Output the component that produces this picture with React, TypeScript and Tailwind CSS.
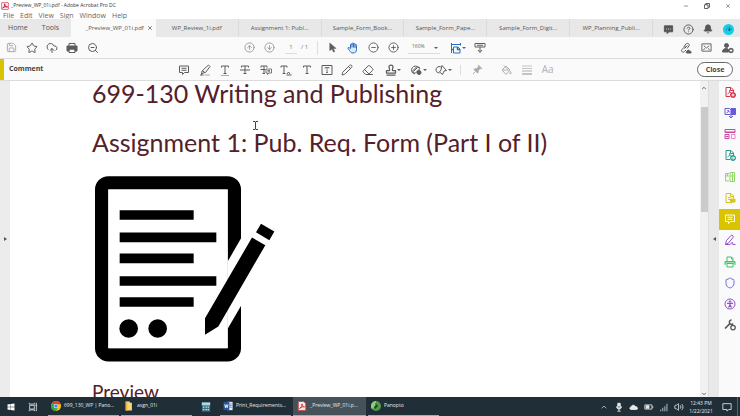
import { useState } from "react";
import type { ReactNode } from "react";
import {
  Bell,
  ChevronUp,
  CircleArrowDown,
  CircleArrowUp,
  CircleMinus,
  CirclePlus,
  CircleQuestionMark,
  CloudUpload,
  Eraser,
  Minus,
  Pencil,
  Save,
  Shield,
  Star,
  Volume2,
  X,
  ZoomOut,
} from "lucide-react";
import { FaWindows } from "react-icons/fa";

interface IconProps {
  children: ReactNode;
  className?: string;
  fill?: string;
}

function Icon({ children, className = "size-3", fill = "none" }: IconProps) {
  return (
    <svg
      viewBox="0 0 24 24"
      className={className}
      fill={fill}
      stroke="currentColor"
      strokeWidth="2"
      strokeLinejoin="round"
      aria-hidden="true"
    >
      {children}
    </svg>
  );
}

interface ToolProps {
  label: string;
  children: ReactNode;
  menu?: boolean;
  className?: string;
}

function Tool({ label, children, menu, className = "" }: ToolProps) {
  return (
    <button type="button" aria-label={label} className={`relative flex h-5 items-center justify-center ${className}`}>
      {children}
      {menu && (
        <svg viewBox="0 0 4 2" className="absolute right-0.5 h-0.5 w-1" fill="currentColor" aria-hidden="true">
          <path d="M0 0h4L2 2z" />
        </svg>
      )}
    </button>
  );
}

function AcrobatLogo({ className }: { className: string }) {
  return (
    <svg viewBox="0 0 24 24" className={className} aria-hidden="true">
      <rect x="1" y="1" width="22" height="22" rx="5" fill="#fbe9ec" stroke="#d6304a" strokeWidth="2" />
      <path
        d="M5 18c3-1 8-9 7-12-1-2-2 0-1 3 2 5 6 7 9 6 1-2-8-2-15 3z"
        fill="none"
        stroke="#c8102e"
        strokeWidth="2.500"
      />
    </svg>
  );
}

const menus = ["File", "Edit", "View", "Sign", "Window", "Help"];

const tabs = [
  "_Preview_WP_01i.pdf",
  "WP_Review_1i.pdf",
  "Assignment 1: Publ...",
  "Sample_Form_Book...",
  "Sample_Form_Pape...",
  "Sample_Form_Digit...",
  "WP_Planning_Publi...",
];

const letterT = <path d="M5 7V4h14v3M12 4v15M9 19h6" />;

const markupTools = [
  {
    label: "Add sticky note",
    icon: (
      <Icon>
        <path d="M3 4h18v13h-8l-4 4v-4H3zM7 8.500h10M7 12.500h10" />
      </Icon>
    ),
  },
  {
    label: "Highlight text",
    icon: (
      <Icon>
        <path d="M19 2l3 3-9 12-5 1-3 3 1-7zM7 14l5 3M2 22h7" />
        <path d="M11 22h11" strokeWidth="1" />
      </Icon>
    ),
  },
  {
    label: "Underline text",
    icon: (
      <Icon>
        {letterT}
        <path d="M4 23h16" strokeWidth="1" />
      </Icon>
    ),
  },
  {
    label: "Strikethrough text",
    icon: (
      <Icon>
        {letterT}
        <path d="M2 12h20" />
      </Icon>
    ),
  },
  {
    label: "Replace text",
    icon: (
      <Icon>
        <path d="M2 7V4h12v3M8 4v15M5 19h5M1 11h10" />
        <path d="M12 10h11v8h-5l-3 3v-3h-3zM15 13h5M15 15.500h5" strokeWidth="1.600" />
      </Icon>
    ),
  },
  {
    label: "Insert text",
    icon: (
      <Icon>
        <path d="M2 7V4h12v3M8 4v15M5 19h6" />
        <path d="M14 20l3-4 3 4M13 22h10" />
      </Icon>
    ),
  },
  { label: "Add text comment", icon: <Icon>{letterT}</Icon> },
  {
    label: "Add text box",
    icon: (
      <Icon>
        <path d="M2 3h20v18H2z" />
        <path d="M8 9V7h8v2M12 7v10M10 17h4" strokeWidth="1.600" />
      </Icon>
    ),
  },
  { label: "Draw freehand", icon: <Pencil className="size-3" /> },
  { label: "Erase drawing", icon: <Eraser className="size-3" /> },
];

const attachTools = [
  {
    label: "Add stamp",
    icon: (
      <Icon>
        <path d="M9 13c1-3-1-4-1-7a4 4 0 0 1 8 0c0 3-2 4-1 7h6v5H3v-5zM3 22h18" strokeWidth="2.500" />
      </Icon>
    ),
  },
  {
    label: "Add attachment",
    icon: (
      <Icon>
        <path d="M10 20a8 8 0 1 1 8-12M7 15l8-8a2.500 2.500 0 0 1 4 3l-8 8a4 4 0 0 1-5-5l7-7" />
        <circle cx="18" cy="17" r="4" fill="currentColor" />
      </Icon>
    ),
  },
  {
    label: "Drawing tools",
    icon: (
      <Icon>
        <path d="M14 8a6.500 6.500 0 1 0-5 10M14 3l9 10-5 1-3 7-6-5 3-4z" />
      </Icon>
    ),
  },
];

const sideTools = [
  {
    label: "Create PDF",
    color: "text-[#d6304a]",
    icon: (
      <Icon>
        <path d="M12 21H4V3h10l5 5v4M13 3v6h6M7 16c3-1 5-5 4-7 0 3 2 5 4 5" />
        <circle cx="18" cy="18" r="5" fill="currentColor" />
        <path d="M15 18h6M18 15v6" stroke="#fff" />
      </Icon>
    ),
  },
  {
    label: "Combine files",
    color: "text-[#6758dc]",
    icon: (
      <Icon>
        <path d="M13 15H2V3h9l3 3M5 12c3-1 4-3 3-6 0 3 2 4 4 4" />
        <path d="M14 3h9v12h-9z" fill="currentColor" />
        <path d="M14 13v9M10 18l4 4 4-4" />
      </Icon>
    ),
  },
  {
    label: "Organize pages",
    color: "text-[#d045a4]",
    icon: (
      <Icon>
        <path d="M2 3h20v6H2zM2 13h8v8H2z" />
        <path d="M2 8h20M3 17h6" />
        <path d="M15 13h7v8h-7z" opacity=".6" />
      </Icon>
    ),
  },
  {
    label: "Export PDF",
    color: "text-[#289c8b]",
    icon: (
      <Icon>
        <path d="M12 21H4V3h10l5 5v4M13 3v6h6M7 16c3-1 5-5 4-7 0 3 2 5 4 5" />
        <circle cx="18" cy="18" r="5" fill="currentColor" />
        <path d="M14 18h7M18 15l3 3-3 3" stroke="#fff" />
      </Icon>
    ),
  },
  {
    label: "Compress PDF",
    color: "text-[#91d768]",
    icon: (
      <Icon>
        <path d="M12 3h9v18h-9zM10 5H3v15h7M12 10h9M17 3v18M3 10h7M7 5v5" />
      </Icon>
    ),
  },
  {
    label: "Send for review",
    color: "text-[#d8c51c]",
    icon: (
      <Icon>
        <path d="M12 21H4V3h10l5 5v4M13 3v6h6M8 11h5M8 15h4" />
        <path d="M13 14h9v6h-5l-3 3v-3h-1z" fill="currentColor" />
      </Icon>
    ),
  },
  {
    label: "Comment",
    color: "bg-[#d9c400] text-white",
    icon: (
      <Icon>
        <path d="M3 4h18v13h-8l-4 4v-4H3zM7 8.500h10M7 12.500h10" />
      </Icon>
    ),
  },
  {
    label: "Fill and sign",
    color: "text-[#9250cb]",
    icon: (
      <Icon>
        <path d="M3 21l2-8L14 3c2-2 6 1 4 4L9 18zM3 21h8c4 0 3-5 6-4 1 1-1 4 1 4h5" />
      </Icon>
    ),
  },
  {
    label: "Scan and OCR",
    color: "text-[#3fc463]",
    icon: (
      <Icon>
        <path d="M6 10V2h9l3 3v5M2 18v-7h20v7M6 15h12v7H6zM15 2v4h3M2 14h20" />
      </Icon>
    ),
  },
  { label: "Protect", color: "text-[#716ade]", icon: <Shield className="size-3" /> },
  {
    label: "Accessibility",
    color: "text-[#9250cb]",
    icon: (
      <Icon>
        <circle cx="12" cy="12" r="10" />
        <circle cx="12" cy="7" r="1.500" fill="currentColor" />
        <path d="M6 10.500h12M12 10v4M12 14l-3 5M12 14l3 5" strokeWidth="2.500" />
      </Icon>
    ),
  },
  {
    label: "More tools",
    color: "text-[#555555]",
    icon: (
      <Icon>
        <path d="M2 19L12 9" strokeWidth="3.500" />
        <path d="M15 2c-3 0-5 3-4 6s5 4 7 1" strokeWidth="3" />
        <circle cx="18" cy="17" r="4.500" strokeWidth="2.500" />
      </Icon>
    ),
  },
];

const apps = [
  {
    name: "699_130_WP | Pano...",
    icon: (
      <svg viewBox="0 0 24 24" className="size-2.5" aria-hidden="true">
        <circle cx="12" cy="12" r="12" fill="#fbc116" />
        <path d="M12 12L1.600 6A12 12 0 0 1 22.400 6z" fill="#e33b2e" />
        <path d="M12 12L1.600 6A12 12 0 0 0 12 24l5-9z" fill="#2da94f" />
        <circle cx="12" cy="12" r="5.500" fill="#fff" />
        <circle cx="12" cy="12" r="4.300" fill="#4285f4" />
      </svg>
    ),
  },
  {
    name: "asgn_01i",
    icon: (
      <svg viewBox="0 0 24 24" className="size-2.5" aria-hidden="true">
        <path d="M4 1h10v3h5v19H4z" fill="#f7d673" />
        <path d="M4 1h4v22H4z" fill="#e8b640" />
      </svg>
    ),
  },
  {
    name: "",
    icon: (
      <svg viewBox="0 0 24 24" className="size-2.5" aria-hidden="true">
        <path d="M2 1h20v22H2z" fill="#3f7080" />
        <path d="M2 1h20v7H2z" fill="#a9dbe2" />
        <path d="M5 11h3v3H5zM11 11h3v3h-3zM16 11h3v3h-3zM5 17h3v3H5zM11 17h3v3h-3zM16 17h3v3h-3z" fill="#d5ecf0" />
      </svg>
    ),
  },
  {
    name: "Print_Requirements...",
    icon: (
      <svg viewBox="0 0 24 24" className="size-2.5" aria-hidden="true">
        <path d="M10 2h13v20H10z" fill="#e5edf8" />
        <path d="M15 7h6M15 11h6M15 15h6" stroke="#2b579a" strokeWidth="1.500" />
        <path d="M1 3l14-2v22L1 21z" fill="#2b579a" />
        <path d="M4 8l2 8 2-7 2 7 2-8" fill="none" stroke="#fff" strokeWidth="2" />
      </svg>
    ),
  },
  {
    name: "_Preview_WP_01i.p...",
    icon: (
      <svg viewBox="0 0 24 24" className="size-2.5" aria-hidden="true">
        <path d="M3 1h13l5 5v17H3z" fill="#f5e9e9" stroke="#d33a3a" strokeWidth="2" />
        <path d="M6 18c4-2 7-8 6-11 0 4 3 7 6 7-4-1-8 1-12 4z" fill="none" stroke="#c62828" strokeWidth="2" />
      </svg>
    ),
  },
  {
    name: "Panopto",
    icon: (
      <svg viewBox="0 0 24 24" className="size-2.5" aria-hidden="true">
        <circle cx="12" cy="12" r="12" fill="#4f9c45" />
        <path d="M12 0v12L2 19A12 12 0 0 1 12 0z" fill="#91cb82" />
        <path d="M10 4l7 8-7 7-3-5 4-3z" fill="#174d20" />
      </svg>
    ),
  },
];

function TitleBar() {
  return (
    <header className="bg-white text-[#333333]">
      <div className="flex h-[11px] items-center pl-px text-[5px]">
        <AcrobatLogo className="mr-0.5 size-2" />
        <span>_Preview_WP_01i.pdf - Adobe Acrobat Pro DC</span>
        <div className="mr-0.5 ml-auto grid w-[63px] grid-cols-3">
          <button type="button" aria-label="Minimize" className="flex justify-center">
            <Minus className="size-1.5" />
          </button>
          <button type="button" aria-label="Restore" className="flex justify-center">
            <Icon className="size-1.5">
              <path d="M2 7h14v15H2zM7 7V2h15v15h-6" strokeWidth="3" />
            </Icon>
          </button>
          <button type="button" aria-label="Close window" className="flex justify-center">
            <X className="size-1.5" />
          </button>
        </div>
      </div>
      <nav className="flex h-2 items-center gap-1.5 pl-[3px] text-[7px] leading-none text-[#666666]">
        {menus.map((menu) => (
          <button key={menu} type="button">
            {menu}
          </button>
        ))}
      </nav>
    </header>
  );
}

function TabBar() {
  const [active, setActive] = useState(tabs[0]);

  return (
    <div className="flex h-[18px] items-stretch bg-[#e8e8e8] text-[6px] text-[#555555]">
      <div className="flex w-[71px] items-center gap-3.5 pl-2 text-[7px]">
        <button type="button">Home</button>
        <button type="button">Tools</button>
      </div>
      <div className="flex min-w-0 flex-1" role="tablist">
        {tabs.map((tab) => (
          <button
            key={tab}
            type="button"
            role="tab"
            aria-selected={tab === active}
            onClick={() => setActive(tab)}
            className={
              tab === active
                ? "flex min-w-0 flex-1 items-center justify-end gap-[3px] bg-[#fafafa] pr-[3px] whitespace-nowrap"
                : "flex min-w-0 flex-1 items-center justify-center border-r border-[#dadada] whitespace-nowrap"
            }
          >
            {tab}
            {tab === active && <X className="size-1.5" strokeWidth={3} />}
          </button>
        ))}
      </div>
      <div className="grid w-[87px] grid-cols-4 items-center pr-0.5 pl-1.5">
        <Tool label="Notifications feed">
          <Icon fill="currentColor" className="size-[11px]">
            <path d="M3 4h18v13h-8l-4 4v-4H3z" />
            <path d="M7 11h10" stroke="#e8e8e8" strokeDasharray="2 2" />
          </Icon>
        </Tool>
        <Tool label="Help">
          <CircleQuestionMark className="size-[11px]" />
        </Tool>
        <Tool label="Alerts">
          <Bell className="size-2.5" fill="currentColor" />
        </Tool>
        <Tool label="Account">
          <svg viewBox="0 0 24 24" className="size-[11px]" aria-hidden="true">
            <circle cx="12" cy="12" r="12" fill="#19cde4" />
            <path d="M7 15l2-8M12 14l2-9 2 9M17 9l2 4" stroke="#149fc0" strokeWidth="2" />
          </svg>
        </Tool>
      </div>
    </div>
  );
}

function MainToolbar() {
  const [page, setPage] = useState("1");

  return (
    <div className="grid h-[22px] grid-cols-[1fr_auto_1fr] items-center border-b border-[#dcdcdc] bg-[#fafafa] text-[#5c5c5c]">
      <div className="ml-px grid w-[102px] grid-cols-5">
        <Tool label="Save" className="text-[#a5a5a5]">
          <Save className="size-[11px]" />
        </Tool>
        <Tool label="Bookmark">
          <Star className="size-3" />
        </Tool>
        <Tool label="Upload to cloud">
          <CloudUpload className="size-3" />
        </Tool>
        <Tool label="Print">
          <Icon>
            <path d="M6 8V3h12v5" />
            <path d="M2 8h20v10h-4v-4H6v4H2z" fill="currentColor" />
            <path d="M6 14h12v7H6z" />
          </Icon>
        </Tool>
        <Tool label="Find text">
          <ZoomOut className="size-3" />
        </Tool>
      </div>
      <div className="flex w-[262px] items-center">
        <div className="grid w-10 grid-cols-2 text-[#999999]">
          <Tool label="Previous page">
            <CircleArrowUp className="size-[11px]" />
          </Tool>
          <Tool label="Next page">
            <CircleArrowDown className="size-[11px]" />
          </Tool>
        </div>
        <label className="flex w-[38px] items-center gap-1 pl-1.5 text-[6px] text-[#777777]">
          <input
            aria-label="Page number"
            value={page}
            onChange={(e) => setPage(e.target.value)}
            className="h-3 w-3 border-b border-[#dddddd] text-center"
          />
          / 1
        </label>
        <div className="mr-1 h-3.5 border-l border-[#dddddd]" />
        <div className="grid w-[82px] grid-cols-4">
          <Tool label="Select tool">
            <Icon fill="currentColor" className="size-[11px]">
              <path d="M6 2v17l5-4 3 7 3-1-3-7h6z" strokeWidth="1" />
            </Icon>
          </Tool>
          <Tool label="Hand tool" className="text-[#2b6fc4]">
            <Icon>
              <path
                d="M7 13V5.500a1.500 1.500 0 0 1 3 0V3.500a1.500 1.500 0 0 1 3 0v1a1.500 1.500 0 0 1 3 0v2a1.500 1.500 0 0 1 3 0V15c0 5-3 7-7 7s-5-2-7-5l-3-4c-1-2 1-3 2.500-1.500zM10 5v6M13 4v7M16 6v6"
                fill="#dbe9f8"
              />
            </Icon>
          </Tool>
          <Tool label="Zoom out">
            <CircleMinus className="size-[11px]" />
          </Tool>
          <Tool label="Zoom in">
            <CirclePlus className="size-[11px]" />
          </Tool>
        </div>
        <div className="relative ml-1 flex items-center">
          <select
            aria-label="Zoom level"
            defaultValue="160%"
            className="h-3 w-8 appearance-none border-b border-[#dddddd] pl-1 text-[5px] text-[#666666]"
          >
            <option>100%</option>
            <option>160%</option>
            <option>200%</option>
          </select>
          <svg
            viewBox="0 0 4 2"
            className="pointer-events-none absolute right-0.5 h-0.5 w-1"
            fill="currentColor"
            aria-hidden="true"
          >
            <path d="M0 0h4L2 2z" />
          </svg>
        </div>
        <Tool label="Fit page" menu className="ml-1 w-6 text-[#2b6fc4]">
          <Icon>
            <path d="M3 2v20M21 2v5M3 5h18M7 10h9l4 4v8H7z" />
            <path d="M15 10v5h5M3 15h4" strokeWidth="3" />
          </Icon>
        </Tool>
        <Tool label="Read mode" className="w-6">
          <Icon>
            <path d="M2 3h20v7H2zM6 6.500h12" />
            <path d="M12 10v9M8 16l4 5 4-5" />
          </Icon>
        </Tool>
      </div>
      <div className="mr-0.5 ml-auto grid w-[63px] grid-cols-3">
        <Tool label="Share link">
          <Icon>
            <path d="M9 13l6-6M8 9l4-5c3-3 8 0 6 4l-4 5M11 8l-7 7c-3 4 2 7 5 4l3-3" />
            <path d="M13 22h9c1-3-1-4-3-4-1-3-5-2-5 1-2 0-2 2-1 3z" fill="currentColor" />
          </Icon>
        </Tool>
        <Tool label="Send by email">
          <Icon className="size-[11px]">
            <path d="M2 4h20v16H2zM6 8l6 5 6-5M5 17l4-3M19 17l-4-3" />
          </Icon>
        </Tool>
        <Tool label="Share with others">
          <Icon>
            <circle cx="9" cy="7" r="4" fill="currentColor" />
            <path d="M1 20c0-5 3-7 8-7 2 0 3 1 4 2v5z" fill="currentColor" />
            <circle cx="18" cy="17" r="4.500" fill="currentColor" />
            <path d="M15.500 17h5M18 14.500v5" stroke="#fff" />
          </Icon>
        </Tool>
      </div>
    </div>
  );
}

function CommentToolbar() {
  return (
    <div className="grid h-[22px] grid-cols-[1fr_auto_1fr] items-center border-b border-[#dcdcdc] bg-[#fafafa] text-[#5c5c5c]">
      <div className="flex h-full items-center border-l-4 border-[#d9c400] pl-[5px]">
        <h2 className="text-[7px] font-bold text-[#444444]">Comment</h2>
      </div>
      <div className="flex w-[392px] items-center">
        <div className="grid w-[204px] grid-cols-10">
          {markupTools.map((tool) => (
            <Tool key={tool.label} label={tool.label}>
              {tool.icon}
            </Tool>
          ))}
        </div>
        <div className="grid w-[76px] grid-cols-3">
          {attachTools.map((tool) => (
            <Tool key={tool.label} label={tool.label} menu>
              {tool.icon}
            </Tool>
          ))}
        </div>
        <div className="mx-1.5 h-2.5 border-l border-[#dddddd]" />
        <Tool label="Keep tool selected" className="w-5 text-[#aaaaaa]">
          <Icon fill="currentColor" className="size-[11px]">
            <path d="M14 2l8 8-2 1-2-1-4 4v4l-2 2-8-8 2-2h4l4-4-1-2z" strokeWidth="1" />
            <path d="M8 16l-6 6" />
          </Icon>
        </Tool>
        <div className="mr-2 ml-auto grid w-[62px] grid-cols-3 text-[#b0b0b0]">
          <Tool label="Fill colour">
            <Icon>
              <path d="M4 12l8-8 8 8-8 9zM8 3l7 7M4 12h16M21 15c2 3 1 5 0 5s-2-2 0-5z" />
            </Icon>
          </Tool>
          <Tool label="Line thickness">
            <Icon>
              <path d="M2 4h20M2 9h20" strokeWidth="1.500" />
              <path d="M2 14h20" />
              <path d="M2 20h20" strokeWidth="3" />
            </Icon>
          </Tool>
          <Tool label="Text properties" className="text-[10px]">
            Aa
          </Tool>
        </div>
      </div>
      <button
        type="button"
        className="mr-[7px] ml-auto h-[15px] w-9 rounded-full border border-[#666666] bg-white text-[7px] leading-none font-bold text-[#444444]"
      >
        Close
      </button>
    </div>
  );
}

function FormDrawing() {
  return (
    <svg viewBox="45 291 540 557" className="ml-[3px] h-[186px] w-[180px]" role="img" aria-label="Form with a pencil">
      <rect x="65" y="311" width="398" height="516" rx="20" fill="none" stroke="#000" strokeWidth="40" />
      <rect x="85" y="331" width="358" height="476" fill="#fff" />
      <path d="M484 476L443 547v202l41-71z" fill="#fff" />
      <path d="M119 393h222v29H119zM119 460h290v29H119zM119 523h222v29H119zM119 591h290v29H119zM119 654h222v29H119z" />
      <circle cx="146" cy="748" r="28" />
      <circle cx="233" cy="748" r="28" />
      <path d="M543 434l40 23-15 26-40-24zM516 475l40 23-141 244-40 25v-50z" />
    </svg>
  );
}

function Workspace() {
  return (
    <div className="flex min-h-0 flex-1 overflow-hidden">
      <button
        type="button"
        aria-label="Show navigation pane"
        className="flex w-2.5 items-center justify-center bg-[#ececec]"
      >
        <svg viewBox="0 0 3 4" className="h-1 w-[3px]" fill="#555555" aria-hidden="true">
          <path d="M0 0l3 2-3 2z" />
        </svg>
      </button>
      <main className="relative min-w-0 flex-1 overflow-hidden bg-white pl-[82px] font-[Lato,sans-serif] text-[#55202a]">
        <h1 className="mb-[25px] text-[25px] leading-6">699-130 Writing and Publishing</h1>
        <h2 className="mb-[22px] text-[25px] leading-6">Assignment 1: Pub. Req. Form (Part I of II)</h2>
        <FormDrawing />
        <h3 className="mt-[18px] text-[19px] leading-6">Preview</h3>
        <svg
          viewBox="0 0 5 9"
          className="absolute top-10 left-[243px] h-[9px] w-[5px]"
          stroke="#444444"
          fill="none"
          aria-hidden="true"
        >
          <path d="M0 .5h2l.5.5.5-.5h2M2.500 1v7M0 8.500h2l.5-.5.5.5h2" />
        </svg>
      </main>
      <div className="flex w-2 flex-col items-center bg-[#f1f1f1] text-[#666666]">
        <ChevronUp className="my-1 size-1.5" strokeWidth={4} />
        <div className="mt-3 h-[105px] w-[7px] bg-[#cbcbcb]" />
        <ChevronUp className="mt-auto size-1.5 rotate-180" strokeWidth={4} />
      </div>
      <button
        type="button"
        aria-label="Hide tools pane"
        className="flex w-[11px] items-center justify-center border-l border-[#dddddd] bg-[#e9e9e9]"
      >
        <svg viewBox="0 0 3 4" className="h-1 w-[3px]" fill="#555555" aria-hidden="true">
          <path d="M3 0L0 2l3 2z" />
        </svg>
      </button>
      <aside className="w-[21px] bg-[#fafafa]">
        <div className="grid h-[255px] grid-rows-12">
          {sideTools.map((tool) => (
            <button
              key={tool.label}
              type="button"
              aria-label={tool.label}
              className={`flex items-center justify-center ${tool.color}`}
            >
              {tool.icon}
            </button>
          ))}
        </div>
      </aside>
    </div>
  );
}

function Taskbar() {
  return (
    <footer className="flex h-[19px] items-stretch bg-[#1f2e37] text-[5px] text-[#e5e9eb]">
      <button type="button" aria-label="Start" className="flex w-[22px] items-center justify-center text-white">
        <FaWindows className="size-2" />
      </button>
      <button type="button" aria-label="Task view" className="mr-1 flex w-[22px] items-center justify-center">
        <Icon className="size-2.5">
          <path d="M4 8h11v9H4zM3 2v3h13V2M3 22v-3h13v3M20 2v20M18 8h4" />
        </Icon>
      </button>
      {apps.map((app) =>
        app.name ? (
          <button
            key={app.name}
            type="button"
            className={
              app.name.startsWith("_Preview")
                ? "mr-0.5 flex w-[73px] items-center gap-[3px] border-b border-[#76b9ed] bg-[#46525a] pl-1 whitespace-nowrap"
                : "mr-0.5 flex w-[71px] items-center gap-[3px] border-b border-[#76b9ed] pl-[3px] whitespace-nowrap"
            }
          >
            {app.icon}
            {app.name}
          </button>
        ) : (
          <button
            key="calculator"
            type="button"
            aria-label="Calculator"
            className="mr-0.5 flex w-6 items-center justify-center"
          >
            {app.icon}
          </button>
        ),
      )}
      <div className="ml-auto grid w-[90px] grid-cols-6 items-center justify-items-center">
        <ChevronUp className="size-2" />
        <Icon className="size-2.5" fill="currentColor">
          <path d="M9 3h6v11H9zM6 11c0 8 12 8 12 0M12 17v5M8 22h8" />
        </Icon>
        <Icon className="size-2.5" fill="currentColor">
          <path d="M5 18c-4 0-4-6 0-6 1-5 8-6 10-1 5-1 8 7 3 7z" />
        </Icon>
        <Icon className="size-2.5">
          <path d="M2 7h17v10H2zM21 10v4" />
          <path d="M5 9h7v6H5z" fill="currentColor" />
        </Icon>
        <Icon className="size-2.5 text-[#93a0a6]">
          <path d="M4 22v-4M9 22v-8M14 22V10M19 22V4" strokeWidth="3" />
        </Icon>
        <Volume2 className="size-2.5" />
      </div>
      <div className="w-[30px] self-center text-center leading-2">
        <time className="block">12:43 PM</time>
        <time className="block">1/22/2021</time>
      </div>
      <button
        type="button"
        aria-label="Action center"
        className="mr-0.5 flex w-[22px] items-center justify-center border-r border-[#54616a]"
      >
        <Icon className="size-2.5">
          <path d="M2 4h20v14h-6l-4 4v-4H2z" />
        </Icon>
      </button>
    </footer>
  );
}

export default function App() {
  return (
    <div className="flex h-screen flex-col overflow-hidden font-['Open_Sans',sans-serif]">
      <TitleBar />
      <TabBar />
      <MainToolbar />
      <CommentToolbar />
      <Workspace />
      <Taskbar />
    </div>
  );
}
